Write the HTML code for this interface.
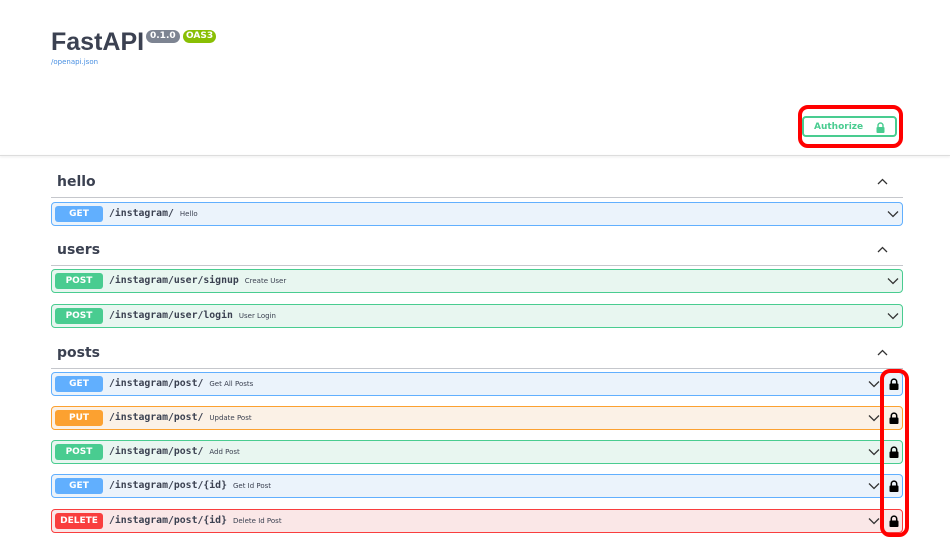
<!DOCTYPE html>
<html><head><style>
body{margin:0;width:950px;height:556px;background:#fff;font-family:"Liberation Sans","DejaVu Sans",sans-serif;position:relative;overflow:hidden;color:#3b4151}
.abs{position:absolute}
.title{left:51px;top:28px;font-size:25px;font-weight:bold;color:#3b4151;font-family:"Liberation Sans",sans-serif}
.ver{left:146px;top:30px;height:13px;line-height:13px;padding:0 4px;border-radius:7px;background:#7d8492;color:#fff;font-size:9px;font-weight:bold;font-family:"DejaVu Sans",sans-serif}
.oas{left:183px;top:30px;height:13px;line-height:13px;padding:0 3px;border-radius:7px;background:#89bf04;color:#fff;font-size:9px;font-weight:bold;font-family:"DejaVu Sans",sans-serif}
.link{left:51px;top:58px;font-size:7px;color:#4990e2;font-family:"DejaVu Sans",sans-serif}
.sep{left:0;top:155px;width:950px;height:1px;background:#ddd;box-shadow:0 1px 2px rgba(0,0,0,.12)}
.auth{left:802px;top:116px;width:95px;height:21px;border:2px solid #49cc90;border-radius:4px;box-sizing:border-box;color:#49cc90;font-weight:bold;font-size:9px;font-family:"DejaVu Sans",sans-serif;line-height:18px;padding-left:10px}
.red{border:4px solid #f00;border-radius:10px;box-sizing:border-box}
.sec{left:57px;font-size:14px;font-weight:bold;font-family:"DejaVu Sans",sans-serif;color:#3b4151}
.secline{left:51px;width:852px;height:1px;background:#c5c7cc}
.op{left:51px;width:852px;height:24px;border:1px solid;border-radius:4px;box-sizing:border-box}
.m{position:absolute;left:3px;top:3px;width:48px;height:16px;border-radius:3px;color:#fff;font-weight:bold;font-size:9px;font-family:"DejaVu Sans",sans-serif;text-align:center;line-height:16px}
.p{position:absolute;left:57px;top:5px;font-family:"DejaVu Sans Mono",monospace;font-weight:bold;font-size:9.8px;color:#3b4151}
.s{font-family:"DejaVu Sans",sans-serif;font-weight:normal;font-size:7px;margin-left:6px}
.get{background:#ebf3fb;border-color:#61affe}.get .m{background:#61affe}
.post{background:#e8f6f0;border-color:#49cc90}.post .m{background:#49cc90}
.put{background:#fbf1e6;border-color:#fca130}.put .m{background:#fca130}
.del{background:#fae7e7;border-color:#f93e3e}.del .m{background:#f93e3e}
.chev{position:absolute;right:3px;top:7px}
.lk{position:absolute;right:3px;top:5px}
</style></head><body>
<div class="abs title">FastAPI</div>
<div class="abs ver">0.1.0</div>
<div class="abs oas">OAS3</div>
<div class="abs link">/openapi.json</div>
<div class="abs auth">Authorize<svg class="abs" style="right:10px;top:4px" width="9" height="11" viewBox="0 0 9 11"><path d="M2 5V3.5a2.5 2.5 0 015 0V5" stroke="#49cc90" stroke-width="1.4" fill="none"/><rect x="0.5" y="5" width="8" height="6" rx="1" fill="#49cc90"/></svg></div>
<div class="abs red" style="left:798px;top:105px;width:105px;height:43px"></div>
<div class="abs sep"></div>

<div class="abs sec" style="top:174px">hello</div>
<svg class="abs" style="left:877px;top:178px" width="11" height="7"><path d="M1 6l4.5-4.5L10 6" stroke="#333" stroke-width="1.3" fill="none"/></svg>
<div class="abs secline" style="top:197px"></div>
<div class="abs op get" style="top:202px"><div class="m">GET</div><div class="p">/instagram/<span class="s">Hello</span></div><svg class="chev" width="12" height="8"><path d="M1 1.5l5 5 5-5" stroke="#333" stroke-width="1.3" fill="none"/></svg></div>

<div class="abs sec" style="top:242px">users</div>
<svg class="abs" style="left:877px;top:246px" width="11" height="7"><path d="M1 6l4.5-4.5L10 6" stroke="#333" stroke-width="1.3" fill="none"/></svg>
<div class="abs secline" style="top:265px"></div>
<div class="abs op post" style="top:269px"><div class="m">POST</div><div class="p">/instagram/user/signup<span class="s">Create User</span></div><svg class="chev" width="12" height="8"><path d="M1 1.5l5 5 5-5" stroke="#333" stroke-width="1.3" fill="none"/></svg></div>
<div class="abs op post" style="top:304px"><div class="m">POST</div><div class="p">/instagram/user/login<span class="s">User Login</span></div><svg class="chev" width="12" height="8"><path d="M1 1.5l5 5 5-5" stroke="#333" stroke-width="1.3" fill="none"/></svg></div>

<div class="abs sec" style="top:345px">posts</div>
<svg class="abs" style="left:877px;top:349px" width="11" height="7"><path d="M1 6l4.5-4.5L10 6" stroke="#333" stroke-width="1.3" fill="none"/></svg>
<div class="abs secline" style="top:368px"></div>

<div class="abs op get" style="top:372px"><div class="m">GET</div><div class="p">/instagram/post/<span class="s">Get All Posts</span></div><svg class="chev" style="right:22px" width="12" height="8"><path d="M1 1.5l5 5 5-5" stroke="#333" stroke-width="1.3" fill="none"/></svg><svg class="lk" width="10" height="12" viewBox="0 0 10 12"><path d="M2.3 6V3.8a2.7 2.7 0 015.4 0V6" stroke="#000" stroke-width="1.5" fill="none"/><rect x="0.5" y="5.5" width="9" height="6.5" rx="1" fill="#000"/></svg></div>
<div class="abs op put" style="top:406px"><div class="m">PUT</div><div class="p">/instagram/post/<span class="s">Update Post</span></div><svg class="chev" style="right:22px" width="12" height="8"><path d="M1 1.5l5 5 5-5" stroke="#333" stroke-width="1.3" fill="none"/></svg><svg class="lk" width="10" height="12" viewBox="0 0 10 12"><path d="M2.3 6V3.8a2.7 2.7 0 015.4 0V6" stroke="#000" stroke-width="1.5" fill="none"/><rect x="0.5" y="5.5" width="9" height="6.5" rx="1" fill="#000"/></svg></div>
<div class="abs op post" style="top:440px"><div class="m">POST</div><div class="p">/instagram/post/<span class="s">Add Post</span></div><svg class="chev" style="right:22px" width="12" height="8"><path d="M1 1.5l5 5 5-5" stroke="#333" stroke-width="1.3" fill="none"/></svg><svg class="lk" width="10" height="12" viewBox="0 0 10 12"><path d="M2.3 6V3.8a2.7 2.7 0 015.4 0V6" stroke="#000" stroke-width="1.5" fill="none"/><rect x="0.5" y="5.5" width="9" height="6.5" rx="1" fill="#000"/></svg></div>
<div class="abs op get" style="top:474px"><div class="m">GET</div><div class="p">/instagram/post/{id}<span class="s">Get Id Post</span></div><svg class="chev" style="right:22px" width="12" height="8"><path d="M1 1.5l5 5 5-5" stroke="#333" stroke-width="1.3" fill="none"/></svg><svg class="lk" width="10" height="12" viewBox="0 0 10 12"><path d="M2.3 6V3.8a2.7 2.7 0 015.4 0V6" stroke="#000" stroke-width="1.5" fill="none"/><rect x="0.5" y="5.5" width="9" height="6.5" rx="1" fill="#000"/></svg></div>
<div class="abs op del" style="top:509px"><div class="m">DELETE</div><div class="p">/instagram/post/{id}<span class="s">Delete Id Post</span></div><svg class="chev" style="right:22px" width="12" height="8"><path d="M1 1.5l5 5 5-5" stroke="#333" stroke-width="1.3" fill="none"/></svg><svg class="lk" width="10" height="12" viewBox="0 0 10 12"><path d="M2.3 6V3.8a2.7 2.7 0 015.4 0V6" stroke="#000" stroke-width="1.5" fill="none"/><rect x="0.5" y="5.5" width="9" height="6.5" rx="1" fill="#000"/></svg></div>
<div class="abs red" style="left:880px;top:369px;width:29px;height:168px"></div>
</body></html>
